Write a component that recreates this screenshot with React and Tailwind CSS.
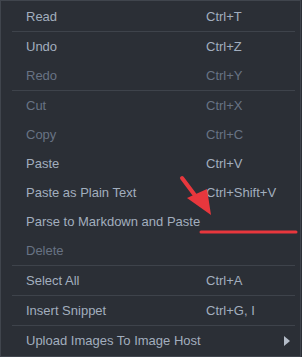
const items = [
  { label: "Read", shortcut: "Ctrl+T" },
  "sep",
  { label: "Undo", shortcut: "Ctrl+Z" },
  { label: "Redo", shortcut: "Ctrl+Y", disabled: true },
  "sep",
  { label: "Cut", shortcut: "Ctrl+X", disabled: true },
  { label: "Copy", shortcut: "Ctrl+C", disabled: true },
  { label: "Paste", shortcut: "Ctrl+V" },
  { label: "Paste as Plain Text", shortcut: "Ctrl+Shift+V" },
  { label: "Parse to Markdown and Paste" },
  { label: "Delete", disabled: true },
  "sep",
  { label: "Select All", shortcut: "Ctrl+A" },
  "sep",
  { label: "Insert Snippet", shortcut: "Ctrl+G, I" },
  "sep",
  { label: "Upload Images To Image Host", submenu: true },
];

function MenuRow({ item }) {
  const color = item.disabled ? "text-[#687384]" : "text-[#a2aebe]";
  return (
    <div className={`flex h-[29px] items-center pl-[25px] pr-[9px] text-[13px] ${color}`}>
      <span className="w-[180px] whitespace-nowrap">{item.label}</span>
      <span className="flex-1 whitespace-nowrap">{item.shortcut}</span>
      {item.submenu ? (
        <svg width="6" height="10" viewBox="0 0 6 10" className="mr-[1px]">
          <path d="M0 0 L6 5 L0 10 Z" fill="#b4bcc8" />
        </svg>
      ) : null}
    </div>
  );
}

export default function App() {
  return (
    <div className="h-[357px] w-[302px] bg-[#2b2f36]" style={{ fontFamily: '"Liberation Sans", Arial, sans-serif' }}>
      <div className="relative h-[357px] w-[301px] border border-[#40454d] bg-[#2b2f36] pt-[1px]">
        {items.map((item, i) =>
          item === "sep" ? (
            <div key={i} className="ml-[11px] mr-[5px] h-px bg-[#3e434b]" />
          ) : (
            <MenuRow key={i} item={item} />
          )
        )}
        <svg className="pointer-events-none absolute left-0 top-0" width="302" height="357">
          <line x1="181" y1="177" x2="199" y2="201" stroke="#e8373d" strokeWidth="4" strokeLinecap="round" />
          <polygon points="210,214 186,197 206,188" fill="#e8373d" />
          <line x1="200" y1="231" x2="295" y2="231" stroke="#e8373d" strokeWidth="3" strokeLinecap="round" />
        </svg>
      </div>
    </div>
  );
}
